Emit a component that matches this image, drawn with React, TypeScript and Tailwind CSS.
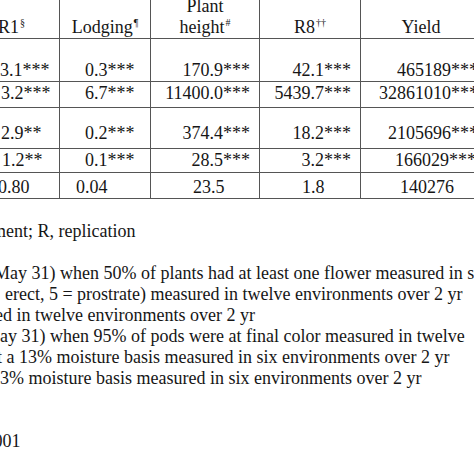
type Cell = { text: string; sup?: string; cls: string };

const header: Cell[][] = [
  [{ text: 'R1', sup: '§', cls: '' }],
  [{ text: 'Lodging', sup: '¶', cls: '' }],
  [{ text: 'Plant', cls: '' }, { text: 'height', sup: '#', cls: '' }],
  [{ text: 'R8', sup: '††', cls: '' }],
  [{ text: 'Yield', cls: '' }],
];

// each data row: height class, vertical alignment class, cells
const rows: { h: string; v: string; cells: Cell[] }[] = [
  {
    h: 'h-[43px]',
    v: 'items-end pb-0',
    cells: [
      { text: '3.1***', cls: 'justify-start pl-[36px]' },
      { text: '0.3***', cls: 'justify-start pl-[25px]' },
      { text: '170.9***', cls: 'justify-end pr-[9px]' },
      { text: '42.1***', cls: 'justify-end pr-[9px]' },
      { text: '465189***', cls: 'justify-end pr-[3px]' },
    ],
  },
  {
    h: 'h-[26px]',
    v: 'items-start pt-[1px]',
    cells: [
      { text: '3.2***', cls: 'justify-start pl-[37px]' },
      { text: '6.7***', cls: 'justify-start pl-[25px]' },
      { text: '11400.0***', cls: 'justify-end pr-[9px]' },
      { text: '5439.7***', cls: 'justify-end pr-[9px]' },
      { text: '32861010***', cls: 'justify-end pr-[3px]' },
    ],
  },
  {
    h: 'h-[41px]',
    v: 'items-end pb-[4px]',
    cells: [
      { text: '2.9**', cls: 'justify-start pl-[37px]' },
      { text: '0.2***', cls: 'justify-start pl-[25px]' },
      { text: '374.4***', cls: 'justify-end pr-[9px]' },
      { text: '18.2***', cls: 'justify-end pr-[9px]' },
      { text: '2105696***', cls: 'justify-end pr-[3px]' },
    ],
  },
  {
    h: 'h-[24px]',
    v: 'items-center',
    cells: [
      { text: '1.2**', cls: 'justify-start pl-[38px]' },
      { text: '0.1***', cls: 'justify-start pl-[25px]' },
      { text: '28.5***', cls: 'justify-end pr-[9px]' },
      { text: '3.2***', cls: 'justify-end pr-[9px]' },
      { text: '166029***', cls: 'justify-end pr-[5px]' },
    ],
  },
  {
    h: 'h-[26px]',
    v: 'items-end pb-0',
    cells: [
      { text: '0.80', cls: 'justify-start pl-[34px]' },
      { text: '0.04', cls: 'justify-start pl-[16px]' },
      { text: '23.5', cls: 'justify-start pl-[42px]' },
      { text: '1.8', cls: 'justify-start pl-[42px]' },
      { text: '140276', cls: 'justify-start pl-[39px]' },
    ],
  },
];

const colW = ['w-[96px]', 'w-[91px]', 'w-[109px]', 'w-[101px]', 'w-[120px]'];

const notes: { text: string; cls: string }[] = [
  { text: 'environment; R, replication', cls: 'ml-[-63px]' },
  { text: '\u00a0', cls: '' },
  { text: 'May 31) when 50% of plants had at least one flower measured in six environments over 2 yr', cls: 'ml-[-6px]' },
  { text: 'erect, 5 = prostrate) measured in twelve environments over 2 yr', cls: 'ml-[5px]' },
  { text: 'measured in twelve environments over 2 yr', cls: 'ml-[-57px]' },
  { text: 'May 31) when 95% of pods were at final color measured in twelve', cls: 'ml-[-16px]' },
  { text: 'at a 13% moisture basis measured in six environments over 2 yr', cls: 'ml-[-11px]' },
  { text: '13% moisture basis measured in six environments over 2 yr', cls: 'ml-[-9px]' },
  { text: '\u00a0', cls: '' },
  { text: '\u00a0', cls: '' },
  { text: '0.001', cls: 'ml-[-20px]' },
];

function Sup({ s }: { s?: string }) {
  if (!s) return null;
  return <span className="inline-block align-top text-[10px] leading-[12px] ml-[1px]">{s}</span>;
}

export default function App() {
  return (
    <div className="w-[474px] h-[474px] overflow-hidden bg-white text-[#161616] text-[18px] leading-[21px] font-['Liberation_Serif']">
      {/* table */}
      <div className="ml-[-36px] w-[517px]">
        <div className="flex h-[39px] border-b border-[#555]">
          {header.map((lines, i) => (
            <div
              key={i}
              className={`${colW[i]} flex flex-col items-center justify-end ${i < 4 ? 'border-r border-[#555]' : ''}`}
            >
              {lines.map((l, j) => (
                <div key={j} className="whitespace-nowrap">
                  {l.text}
                  <Sup s={l.sup} />
                </div>
              ))}
            </div>
          ))}
        </div>
        {rows.map((r, ri) => (
          <div key={ri} className={`flex ${r.h} border-b border-[#555]`}>
            {r.cells.map((c, ci) => (
              <div
                key={ci}
                className={`${colW[ci]} flex ${r.v} ${c.cls} ${ci < 4 ? 'border-r border-[#555]' : ''}`}
              >
                <span className="whitespace-nowrap">{c.text}</span>
              </div>
            ))}
          </div>
        ))}
      </div>

      {/* footnotes */}
      <div className="pt-[22px]">
        {notes.map((n, i) => (
          <div key={i} className={`whitespace-nowrap ${n.cls}`}>
            {n.text}
          </div>
        ))}
      </div>
    </div>
  );
}
